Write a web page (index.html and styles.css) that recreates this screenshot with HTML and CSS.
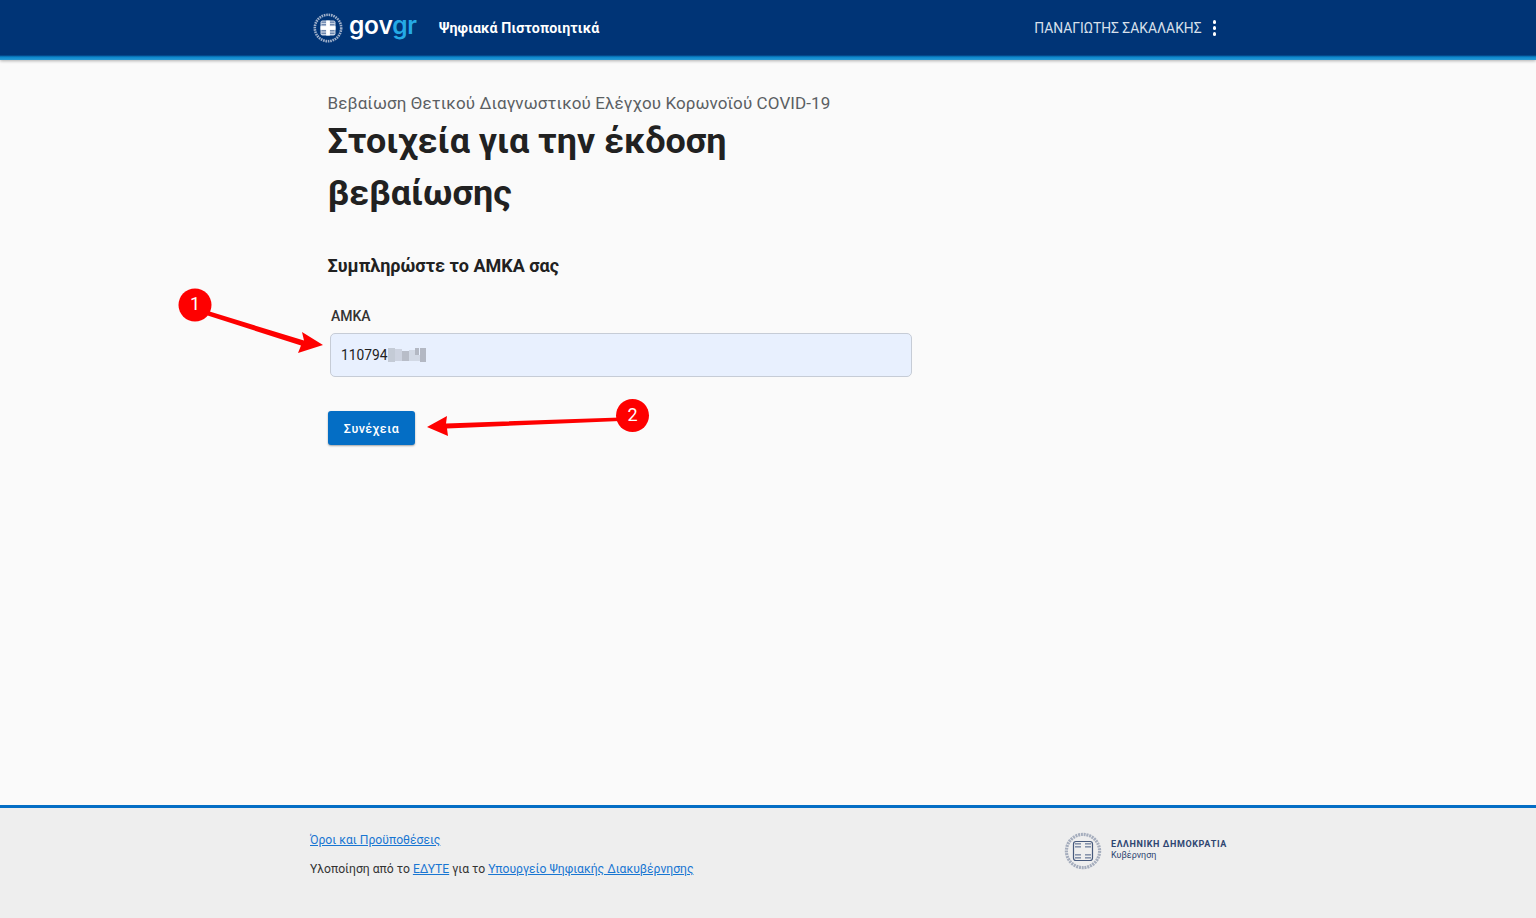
FILE: index.html
```html
<!DOCTYPE html>
<html lang="el">
<head>
<meta charset="utf-8">
<title>Ψηφιακά Πιστοποιητικά</title>
<link rel="stylesheet" href="styles.css">
</head>
<body>
<div class="page">
  <header class="topbar">
    <div class="topbar-inner">
      <div class="brand">
        <svg class="emblem" viewBox="0 0 30 30" width="30" height="30">
          <circle cx="15" cy="15" r="13.2" fill="none" stroke="#9fb0ca" stroke-width="2.6" stroke-dasharray="1.6 .8"/>
          <rect x="7.5" y="7.5" width="15" height="15" rx="2" fill="#c9d3e3"/>
          <g fill="#6d87ae"><rect x="8.5" y="8.5" width="4.6" height="1.4"/><rect x="8.5" y="11" width="4.6" height="1.4"/><rect x="16.9" y="8.5" width="4.6" height="1.4"/><rect x="16.9" y="11" width="4.6" height="1.4"/><rect x="8.5" y="17" width="4.6" height="1.4"/><rect x="8.5" y="19.6" width="4.6" height="1.4"/><rect x="16.9" y="17" width="4.6" height="1.4"/><rect x="16.9" y="19.6" width="4.6" height="1.4"/></g>
          <rect x="13.2" y="7.5" width="3.6" height="15" fill="#fff"/><rect x="7.5" y="13.2" width="15" height="3.6" fill="#fff"/>
        </svg>
        <span class="wordmark">gov<span class="wordmark-gr">gr</span></span>
        <span class="service">Ψηφιακά Πιστοποιητικά</span>
      </div>
      <div class="user">
        <span class="user-name">ΠΑΝΑΓΙΩΤΗΣ ΣΑΚΑΛΑΚΗΣ</span>
        <span class="kebab"><i></i><i></i><i></i></span>
      </div>
    </div>
  </header>

  <main class="main">
    <p class="caption">Βεβαίωση Θετικού Διαγνωστικού Ελέγχου Κορωνοϊού COVID-19</p>
    <h1 class="title">Στοιχεία για την έκδοση βεβαίωσης</h1>
    <h2 class="subtitle">Συμπληρώστε το ΑΜΚΑ σας</h2>
    <label class="field-label">ΑΜΚΑ</label>
    <div class="input">110794<svg class="mosaic" viewBox="0 0 40 16" width="40" height="16"><g fill="#8f939b"><rect x="0" y="1" width="7" height="14" opacity=".4"/><rect x="7" y="2" width="7" height="12" opacity=".3"/><rect x="14" y="4" width="7" height="10" opacity=".55"/><rect x="21" y="3" width="6" height="11" opacity=".25"/><rect x="27" y="1" width="4" height="7" opacity=".6"/><rect x="27" y="8" width="5" height="6" opacity=".25"/><rect x="32" y="1" width="6" height="14" opacity=".6"/></g></svg></div>
    <button class="btn" type="button">Συνέχεια</button>
  </main>

  <footer class="footer">
    <div class="footer-inner">
      <div class="footer-links">
        <a href="#" class="link">Όροι και Προϋποθέσεις</a>
        <p class="credit">Υλοποίηση από το <a href="#" class="link">ΕΔΥΤΕ</a> για το <a href="#" class="link">Υπουργείο Ψηφιακής Διακυβέρνησης</a></p>
      </div>
      <div class="gov">
        <svg viewBox="0 0 38 38" width="38" height="38">
          <circle cx="19" cy="19" r="16.6" fill="none" stroke="#a5adbd" stroke-width="3.2" stroke-dasharray="2 .8"/>
          <rect x="9.5" y="9.5" width="19" height="19" rx="2.5" fill="none" stroke="#46597c" stroke-width="1.2"/>
          <g fill="#8794ac"><rect x="11" y="11" width="6" height="1.6"/><rect x="11" y="14" width="6" height="1.6"/><rect x="21" y="11" width="6" height="1.6"/><rect x="21" y="14" width="6" height="1.6"/><rect x="11" y="22" width="6" height="1.6"/><rect x="11" y="25" width="6" height="1.6"/><rect x="21" y="22" width="6" height="1.6"/><rect x="21" y="25" width="6" height="1.6"/></g>
        </svg>
        <div class="gov-text">
          <span class="gov-name">ΕΛΛΗΝΙΚΗ ΔΗΜΟΚΡΑΤΙΑ</span>
          <span class="gov-sub">Κυβέρνηση</span>
        </div>
      </div>
    </div>
  </footer>

  <svg class="annotations" viewBox="0 0 1536 918" width="1536" height="918">
    <g fill="#fe0000">
      <path d="M208 311 L304 340.5 L302 332 L323 345 L298 353 L301 345.5 L206 315 Z"/>
      <circle cx="195" cy="305" r="16.5"/>
      <path d="M620 417.5 L446 423.5 L447 416 L427 427 L448 436 L447 428.5 L620 421 Z"/>
      <circle cx="632.5" cy="415.5" r="16.5"/>
    </g>
    <g class="annotation-num">
      <text x="195" y="310" text-anchor="middle">1</text>
      <text x="632.5" y="421" text-anchor="middle">2</text>
    </g>
  </svg>
</div>
</body>
</html>
```
FILE: styles.css
```css
* { box-sizing: border-box; }
html, body { margin: 0; padding: 0; }
body { font-family: Roboto, "Noto Sans", sans-serif; background: #fafafa; color: #212121; }
.page { position: relative; width: 1536px; height: 918px; display: flex; flex-direction: column; overflow: hidden; }

.topbar { height: 60px; background: linear-gradient(#003476 0, #003476 55px, #0b86cc 57px, #2a9bd6 60px); box-shadow: 0 1px 3px rgba(0,0,0,.3); position: relative; }
.topbar-inner { width: 916px; margin-left: 313px; height: 56px; display: flex; align-items: center; justify-content: space-between; }
.brand { display: flex; align-items: center; }
.wordmark { font-family: Inter, Lato, sans-serif; font-weight: 600; font-size: 24.5px; line-height: 28px; color: #fff; margin-left: 6px; margin-top: -6px; letter-spacing: -.2px; width: 68px; }
.wordmark-gr { color: #25aae6; }
.service { font-size: 14.2px; font-weight: 700; color: #fff; margin-left: 22px; letter-spacing: .1px; }
.user { display: flex; align-items: center; gap: 9px; padding-right: 11px; }
.user-name { font-size: 13.85px; color: #d8e0ec; }
.kebab { display: flex; flex-direction: column; gap: 2.6px; padding: 0 2px; }
.kebab i { display: block; width: 3.4px; height: 3.4px; border-radius: 50%; background: #fff; }

.main { flex: 1; padding: 33px 0 0 327.5px; }
.caption { margin: 0; font-size: 17px; line-height: 20px; color: #5b5f63; letter-spacing: .1px; }
.title { margin: 2px 0 0; width: 480px; font-size: 35.9px; line-height: 52px; font-weight: 700; color: #212121; }
.subtitle { margin: 35px 0 0; font-size: 18px; line-height: 24px; font-weight: 700; color: #212121; }
.field-label { display: block; margin: 28px 0 0 3.5px; font-size: 14px; line-height: 20px; font-weight: 500; color: #333; }
.input { display: flex; align-items: center; margin: 7px 0 0 2.5px; width: 582px; height: 44px; padding: 0 10px; background: #e8f0fe; border: 1px solid #c6ccd6; border-radius: 5px; font-size: 13.8px; color: #212121; }
.mosaic { display: block; }
.btn { display: block; margin: 34px 0 0 .5px; width: 87px; height: 34px; padding: 0; border: 0; border-radius: 3px; background: #046ec5; color: #fff; font-family: inherit; font-size: 12.5px; font-weight: 500; letter-spacing: .45px; box-shadow: 0 1px 2px rgba(0,0,0,.35); }

.footer { height: 113px; background: #eeeeee; border-top: 3px solid #046ec5; }
.footer-inner { width: 918px; margin-left: 310px; padding-top: 24px; display: flex; justify-content: space-between; }
.link { color: #1976d2; text-decoration: underline; }
.footer-links { font-size: 12.15px; line-height: 16px; color: #333; }
.footer-links > .link { display: block; }
.credit { margin: 13px 0 0; }
.gov { display: flex; align-items: center; gap: 9px; margin-top: 0; height: 38px; margin-right: 1px; }
.gov-text { display: flex; flex-direction: column; margin-top: -3px; }
.gov-name { font-size: 9px; line-height: 12px; font-weight: 700; letter-spacing: .6px; color: #2f4672; }
.gov-sub { font-size: 9px; line-height: 11px; color: #2f4672; }

.annotations { position: absolute; left: 0; top: 0; pointer-events: none; }
.annotation-num { font-family: Roboto, sans-serif; font-size: 18px; fill: #fff; }
```
